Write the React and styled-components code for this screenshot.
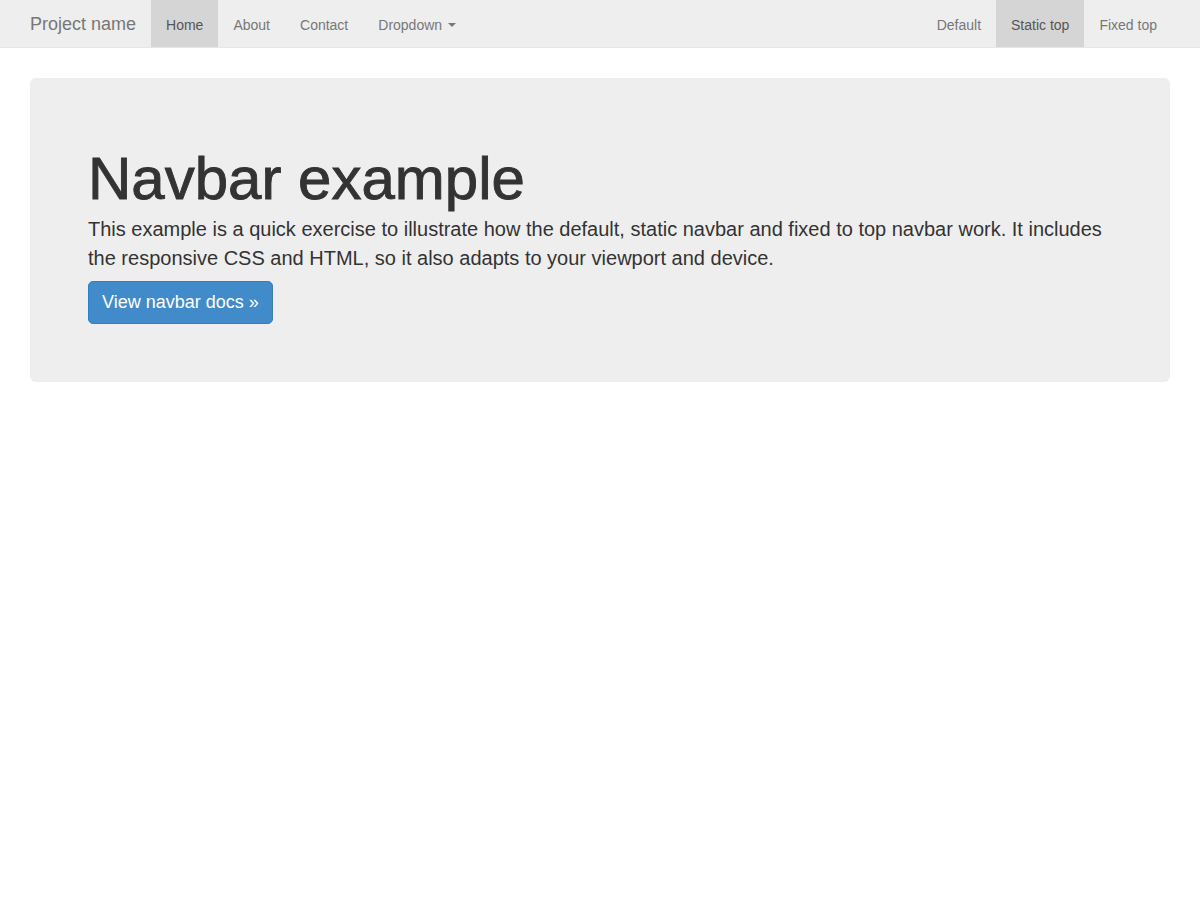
import React from 'react';
import styled, { createGlobalStyle } from 'styled-components';

const Global = createGlobalStyle`
  html, body {
    margin: 0;
    padding: 0;
    background: #fff;
  }
  body {
    font-family: "Liberation Sans", Arial, sans-serif;
    color: #333;
    -webkit-font-smoothing: antialiased;
  }
`;

const Navbar = styled.nav`
  height: 48px;
  background-color: #eee;
  border-bottom: 1px solid #e6e6e6;
  box-sizing: border-box;
`;

const NavContainer = styled.div`
  width: 1170px;
  margin: 0 auto;
  display: flex;
  align-items: stretch;
  height: 100%;
`;

const Brand = styled.a`
  display: flex;
  align-items: center;
  padding: 2px 15px 0;
  font-size: 18px;
  color: #777;
  text-decoration: none;
`;

const NavList = styled.ul`
  display: flex;
  list-style: none;
  margin: 0;
  padding: 0;
  margin-left: ${({right}) => (right ? 'auto' : '0')};
  margin-right: ${({right}) => (right ? '13px' : '0')};
`;

const NavLink = styled.a`
  display: flex;
  align-items: center;
  height: 100%;
  box-sizing: border-box;
  padding: 2px 15px 0;
  font-size: 14px;
  text-decoration: none;
  color: ${({active}) => (active ? '#555' : '#777')};
  background-color: ${({active}) => (active ? '#d5d5d5' : 'transparent')};
`;

const Caret = styled.span`
  display: inline-block;
  width: 0;
  height: 0;
  margin-left: 6px;
  margin-top: 1px;
  border-top: 4px solid #777;
  border-left: 4px solid transparent;
  border-right: 4px solid transparent;
`;

const Container = styled.div`
  width: 1140px;
  margin: 30px auto 0;
`;

const Jumbotron = styled.div`
  background-color: #eee;
  border-radius: 6px;
  padding: 71px 58px 58px;
  height: 304px;
  box-sizing: border-box;
`;

const Title = styled.h1`
  margin: 0;
  font-size: 60px;
  line-height: 1;
  font-weight: normal;
  color: #333;
  -webkit-text-stroke: 0.9px #333;
`;

const Lead = styled.p`
  margin: 6px 0 8px;
  font-size: 20px;
  line-height: 29px;
  font-weight: 300;
  color: #333;
`;

const Button = styled.a`
  display: inline-block;
  padding: 10px 13px;
  font-size: 18px;
  line-height: 21px;
  color: #fff;
  text-decoration: none;
  background-color: #428bca;
  border: 1px solid #357ebd;
  border-radius: 5px;
`;

const App = () => {
  const left = ['Home', 'About', 'Contact'];
  const right = ['Default', 'Static top', 'Fixed top'];

  return (
    <>
      <Global />
      <Navbar>
        <NavContainer>
          <Brand href="#">Project name</Brand>
          <NavList>
            {left.map((item, i) => (
              <li key={item}>
                <NavLink href="#" active={i === 0 ? 1 : 0}>{item}</NavLink>
              </li>
            ))}
            <li>
              <NavLink href="#">Dropdown <Caret /></NavLink>
            </li>
          </NavList>
          <NavList right>
            {right.map((item) => (
              <li key={item}>
                <NavLink href="#" active={item === 'Static top' ? 1 : 0}>{item}</NavLink>
              </li>
            ))}
          </NavList>
        </NavContainer>
      </Navbar>

      <Container>
        <Jumbotron>
          <Title>Navbar example</Title>
          <Lead>
            This example is a quick exercise to illustrate how the default, static navbar and fixed to top navbar work. It includes the responsive CSS and HTML, so it also adapts to your viewport and device.
          </Lead>
          <Button href="#">View navbar docs &raquo;</Button>
        </Jumbotron>
      </Container>
    </>
  );
};

export default App;
